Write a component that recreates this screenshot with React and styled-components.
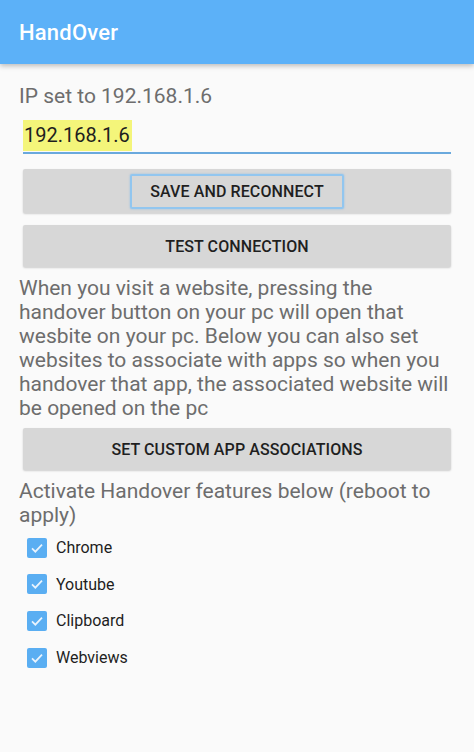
import React, { useState } from 'react'
import styled, { createGlobalStyle } from 'styled-components'

const GlobalStyle = createGlobalStyle`
  html, body {
    margin: 0;
    padding: 0;
    background: #fafafa;
    font-family: Roboto, 'Liberation Sans', sans-serif;
  }
`

const Screen = styled.div`
  width: 474px;
  min-height: 752px;
  background: #fafafa;
`

const AppBar = styled.header`
  height: 64px;
  background: #5cb1f8;
  display: flex;
  align-items: center;
  padding: 0 19px;
  box-shadow: 0 2px 5px rgba(0, 0, 0, 0.25);
  position: relative;
`

const Title = styled.h1`
  margin: 0;
  font-size: 22px;
  font-weight: 500;
  color: #ffffff;
  letter-spacing: 0.2px;
`

const Content = styled.main`
  padding: 20px 23px 0 19px;
  display: flex;
  flex-direction: column;
`

const Label = styled.p`
  margin: 0;
  font-size: 21px;
  line-height: 24px;
  color: #6d6d6d;
`

const InputWrap = styled.div`
  margin: 12px 0 0 4px;
  padding-bottom: 1px;
  border-bottom: 2px solid #6aa9dd;
  height: 31px;
  display: flex;
  align-items: center;
`

const Highlight = styled.span`
  background: #f4f57a;
  font-size: 20px;
  line-height: 31px;
  color: #1e1e1e;
  padding: 0 2px 0 1px;
`

const Button = styled.div`
  margin: ${p => p.mt}px 0 0 4px;
  height: ${p => p.h || 42}px;
  background: #d7d7d7;
  border-radius: 2px;
  box-shadow: 0 1px 2px rgba(0, 0, 0, 0.18);
  display: flex;
  align-items: center;
  justify-content: center;
`

const ButtonText = styled.span`
  font-size: 16px;
  font-weight: 500;
  color: #1f1f1f;
  letter-spacing: 0.1px;
  line-height: 19px;
  padding: ${p => p.focused ? '6px 18px' : '0'};
  border: ${p => p.focused ? '2px solid #92c6ef' : 'none'};
  box-shadow: ${p => p.focused ? '0 0 2px rgba(90, 170, 240, 0.6)' : 'none'};
  border-radius: 2px;
`

const Paragraph = styled(Label)`
  margin-top: 9px;
`

const SectionLabel = styled(Label)`
  margin-top: 9px;
`

const CheckList = styled.div`
  display: flex;
  flex-direction: column;
  gap: 15.7px;
  margin: 10px 0 0 8px;
`

const CheckRow = styled.label`
  display: flex;
  align-items: center;
  gap: 9px;
  height: 21px;
  font-size: 16px;
  color: #1e1e1e;
`

const Box = styled.span`
  width: 20px;
  height: 20px;
  border-radius: 2px;
  background: ${p => p.on ? '#5aaef2' : 'transparent'};
  border: ${p => p.on ? 'none' : '2px solid #777'};
  box-sizing: border-box;
  display: flex;
  align-items: center;
  justify-content: center;
`

const Check = ({ label, on, toggle }) => (
  <CheckRow onClick={toggle}>
    <Box on={on}>
      {on && (
        <svg width='16' height='16' viewBox='0 0 24 24'>
          <path d='M4.5 12.5l5 5 10-10.5' fill='none' stroke='#eaf4fd' strokeWidth='2.6' />
        </svg>
      )}
    </Box>
    {label}
  </CheckRow>
)

const App = () => {
  const [checks, setChecks] = useState({ Chrome: true, Youtube: true, Clipboard: true, Webviews: true })
  const toggle = k => setChecks({ ...checks, [k]: !checks[k] })

  return (
    <Screen>
      <GlobalStyle />
      <AppBar>
        <Title>HandOver</Title>
      </AppBar>
      <Content>
        <Label>IP set to 192.168.1.6</Label>
        <InputWrap>
          <Highlight>192.168.1.6</Highlight>
        </InputWrap>
        <Button mt={15} h={44}>
          <ButtonText focused>SAVE AND RECONNECT</ButtonText>
        </Button>
        <Button mt={12}>
          <ButtonText>TEST CONNECTION</ButtonText>
        </Button>
        <Paragraph>
          When you visit a website, pressing the handover button on your pc will open that wesbite on your pc. Below you can also set websites to associate with apps so when you handover that app, the associated website will be opened on the pc
        </Paragraph>
        <Button mt={8}>
          <ButtonText>SET CUSTOM APP ASSOCIATIONS</ButtonText>
        </Button>
        <SectionLabel>Activate Handover features below (reboot to apply)</SectionLabel>
        <CheckList>
          {Object.keys(checks).map(k => (
            <Check key={k} label={k} on={checks[k]} toggle={() => toggle(k)} />
          ))}
        </CheckList>
      </Content>
    </Screen>
  )
}

export default App
